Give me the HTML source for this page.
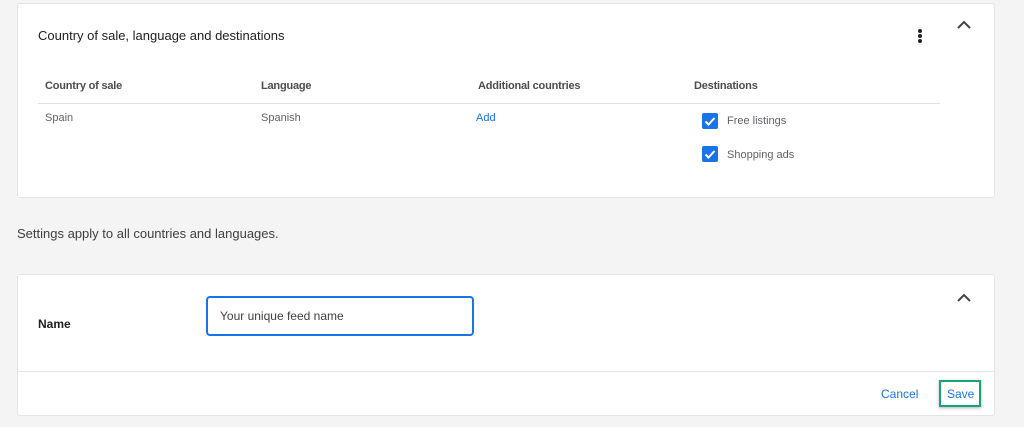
<!DOCTYPE html>
<html><head><style>
*{margin:0;padding:0;box-sizing:border-box}
body{width:1024px;height:427px;background:#f4f4f4;font-family:"Liberation Sans",sans-serif;position:relative;overflow:hidden;color:#3c4043}
.card{position:absolute;background:#fff;border:1px solid #e4e4e4;border-radius:3px}
.t{position:absolute;white-space:nowrap}
.cb{position:absolute;width:16px;height:16px;background:#1a73e8;border-radius:2px}
</style></head><body>
<div class="card" style="left:17px;top:3px;width:978px;height:195px"></div>
<div class="t" style="left:38px;top:28px;font-size:13px;color:#202124">Country of sale, language and destinations</div>
<div style="position:absolute;left:918px;top:29px;width:4px;height:4px;border-radius:2px;background:#202124;box-shadow:0 5px 0 #202124,0 10px 0 #202124"></div>
<svg style="position:absolute;left:955px;top:19px" width="18" height="12"><path d="M3 9 L9 3 L15 9" fill="none" stroke="#444" stroke-width="2"/></svg>
<div class="t" style="left:45px;top:80px;font-size:11px;color:#4a4d51;font-weight:bold;letter-spacing:-0.2px">Country of sale</div>
<div class="t" style="left:261px;top:80px;font-size:11px;color:#4a4d51;font-weight:bold;letter-spacing:-0.2px">Language</div>
<div class="t" style="left:478px;top:80px;font-size:11px;color:#4a4d51;font-weight:bold;letter-spacing:-0.2px">Additional countries</div>
<div class="t" style="left:694px;top:80px;font-size:11px;color:#4a4d51;font-weight:bold;letter-spacing:-0.2px">Destinations</div>
<div style="position:absolute;left:38px;top:103px;width:902px;height:1px;background:#e0e0e0"></div>
<div class="t" style="left:45px;top:112px;font-size:11px;color:#5f6368">Spain</div>
<div class="t" style="left:261px;top:112px;font-size:11px;color:#5f6368">Spanish</div>
<div class="t" style="left:476px;top:112px;font-size:11px;color:#1a73e8">Add</div>
<div class="cb" style="left:702px;top:113px"><svg width="16" height="16"><path d="M3.5 8.5 L6.5 11.5 L12.5 5" fill="none" stroke="#fff" stroke-width="2"/></svg></div>
<div class="t" style="left:727px;top:115px;font-size:11px;color:#5f6368">Free listings</div>
<div class="cb" style="left:702px;top:146px"><svg width="16" height="16"><path d="M3.5 8.5 L6.5 11.5 L12.5 5" fill="none" stroke="#fff" stroke-width="2"/></svg></div>
<div class="t" style="left:727px;top:149px;font-size:11px;color:#5f6368">Shopping ads</div>

<div class="t" style="left:17px;top:226px;font-size:13px;color:#3c4043">Settings apply to all countries and languages.</div>

<div class="card" style="left:17px;top:274px;width:978px;height:142px"></div>
<svg style="position:absolute;left:955px;top:292px" width="18" height="12"><path d="M3 9 L9 3 L15 9" fill="none" stroke="#444" stroke-width="2"/></svg>
<div class="t" style="left:38px;top:317px;font-size:12px;color:#202124;font-weight:bold">Name</div>
<div style="position:absolute;left:206px;top:296px;width:268px;height:40px;border:2px solid #1a73e8;border-radius:4px"></div>
<div class="t" style="left:220px;top:309px;font-size:12px;color:#3c4043">Your unique feed name</div>
<div style="position:absolute;left:18px;top:371px;width:976px;height:1px;background:#e4e4e4"></div>
<div class="t" style="left:881px;top:387px;font-size:12px;color:#1a73e8">Cancel</div>
<div style="position:absolute;left:939px;top:380px;width:42px;height:27px;border:2px solid #1aa37a;box-shadow:0 1px 3px rgba(0,0,0,.3)"></div>
<div class="t" style="left:947px;top:387px;font-size:12px;color:#1a73e8">Save</div>
</body></html>
